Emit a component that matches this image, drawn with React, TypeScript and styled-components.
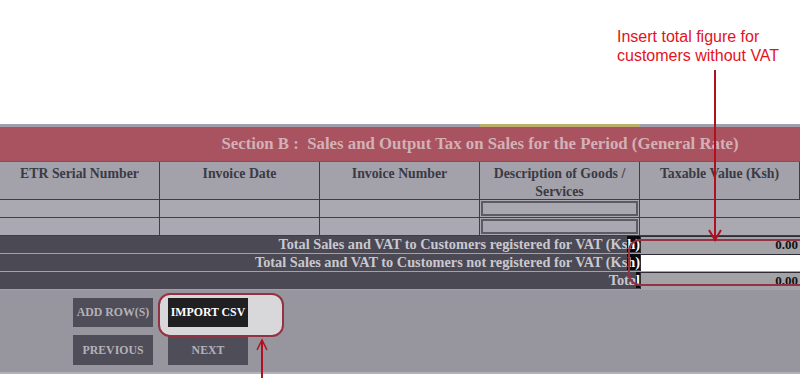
import React from "react";
import styled, { createGlobalStyle } from "styled-components";

const Global = createGlobalStyle`
  html, body { margin: 0; padding: 0; background: #ffffff; }
  body { width: 800px; height: 378px; overflow: hidden; }
  * { box-sizing: border-box; }
`;

const Page = styled.div`
  position: relative;
  width: 800px;
  height: 378px;
  overflow: hidden;
  font-family: "Liberation Serif", "DejaVu Serif", serif;
`;

const TopWhite = styled.div`
  height: 124px;
  background: #ffffff;
`;

const Strip = styled.div`
  height: 3px;
  display: grid;
  grid-template-columns: 480px 160px 160px;
  background: #9f9eab;
`;

const StripSeg = styled.div<{ $c: string }>`
  background: ${(p) => p.$c};
`;

const SectionBar = styled.div`
  height: 35px;
  background: #a8535f;
  color: #d3b1b6;
  font-weight: bold;
  font-size: 16.8px;
  display: flex;
  align-items: center;
  justify-content: center;
  padding-left: 160px;
  white-space: pre;
  border-bottom: 1px solid #6e5a63;
`;

const Grid = styled.div`
  display: grid;
  grid-template-columns: repeat(5, 160px);
`;

const HeadCell = styled.div`
  height: 38px;
  background: #a3a2ab;
  border-right: 1px solid #3e3d48;
  border-bottom: 1px solid #3e3d48;
  color: #3b3a44;
  font-weight: bold;
  font-size: 13.8px;
  line-height: 18px;
  text-align: center;
  padding: 3px 4px 0;
  &:last-child { border-right: none; }
`;

const BodyCell = styled.div<{ $boxed?: boolean; $last?: boolean }>`
  height: 18px;
  background: #aaa9b2;
  border-right: ${(p) => (p.$last ? "none" : "1px solid #3e3d48")};
  border-bottom: 1px solid #3e3d48;
  padding: ${(p) => (p.$boxed ? "1px" : "0")};
`;

const InsetBox = styled.div`
  height: 100%;
  border: 2px solid #5c5b64;
  background: #a9a8b1;
`;

const TotalRow = styled.div`
  display: grid;
  grid-template-columns: 640px 160px;
  height: 18px;
  background: #4b4954;
  border-bottom: 1px solid #a3a2ab;
`;

const TotalLabel = styled.div`
  color: #c9c8cf;
  font-weight: bold;
  font-size: 14.3px;
  line-height: 17px;
  text-align: right;
  white-space: nowrap;
`;

const Clip = styled.span`
  background: #0a0a0e;
  color: #ffffff;
`;

const ValueCell = styled.div<{ $white?: boolean }>`
  background: ${(p) => (p.$white ? "#ffffff" : "#a3a2a7")};
  border-top: 1px solid #2e2d36;
  border-left: 1px solid #2e2d36;
  color: #111111;
  font-weight: bold;
  font-size: 13px;
  line-height: 16px;
  text-align: right;
  padding-right: 2px;
`;

const Lower = styled.div`
  height: 84px;
  background: #97969f;
  border-bottom: 2px solid #b2b1b9;
  display: grid;
  grid-template-columns: 80px 80px;
  grid-template-rows: 29px 30px;
  column-gap: 15px;
  row-gap: 8px;
  padding: 8px 0 0 73px;
`;

const Btn = styled.div<{ $dark?: boolean }>`
  background: ${(p) => (p.$dark ? "#201f22" : "#4f4d58")};
  color: ${(p) => (p.$dark ? "#ffffff" : "#b3b2ba")};
  font-weight: bold;
  font-size: 11.8px;
  display: flex;
  align-items: center;
  justify-content: center;
  white-space: nowrap;
  position: relative;
  z-index: ${(p) => (p.$dark ? 2 : 0)};
`;

const Note = styled.div`
  position: absolute;
  left: 617px;
  top: 27px;
  color: #e3121c;
  font-family: "Liberation Sans", Arial, sans-serif;
  font-size: 16px;
  line-height: 19px;
`;

const Ring = styled.div<{ $fill?: boolean }>`
  position: absolute;
  border: 2px solid #943243;
  border-radius: 12px;
  background: ${(p) => (p.$fill ? "#d8d8da" : "transparent")};
`;

const Overlay = styled.svg`
  position: absolute;
  left: 0;
  top: 0;
  pointer-events: none;
  z-index: 3;
`;

const cols = ["ETR Serial Number", "Invoice Date", "Invoice Number", "Description of Goods / Services", "Taxable Value (Ksh)"];

export default function App() {
  return (
    <Page>
      <Global />
      <TopWhite />
      <Strip>
        <StripSeg $c="#9f9eab" />
        <StripSeg $c="#bcae6c" />
        <StripSeg $c="#9f9eab" />
      </Strip>
      <SectionBar>{"Section B :  Sales and Output Tax on Sales for the Period (General Rate)"}</SectionBar>
      <Grid>
        {cols.map((c) => (
          <HeadCell key={c}>{c}</HeadCell>
        ))}
        {[0, 1].map((r) =>
          [0, 1, 2, 3, 4].map((i) => (
            <BodyCell key={`${r}-${i}`} $boxed={i === 3} $last={i === 4}>
              {i === 3 && <InsetBox />}
            </BodyCell>
          ))
        )}
      </Grid>
      <TotalRow>
        <TotalLabel>
          Total Sales and VAT to Customers registered for VAT (Ks<Clip>h)</Clip>
        </TotalLabel>
        <ValueCell>0.00</ValueCell>
      </TotalRow>
      <TotalRow>
        <TotalLabel>
          Total Sales and VAT to Customers not registered for VAT (Ks<Clip>h)</Clip>
        </TotalLabel>
        <ValueCell $white />
      </TotalRow>
      <TotalRow>
        <TotalLabel>
          Tota<Clip>l</Clip>
        </TotalLabel>
        <ValueCell>0.00</ValueCell>
      </TotalRow>
      <Lower>
        <Btn>ADD ROW(S)</Btn>
        <Btn $dark>IMPORT CSV</Btn>
        <Btn>PREVIOUS</Btn>
        <Btn>NEXT</Btn>
      </Lower>

      <Ring $fill style={{ left: 158, top: 293, width: 126, height: 44, zIndex: 1 }} />
      <Ring style={{ left: 628, top: 239, width: 190, height: 47, zIndex: 3 }} />

      <Note>
        Insert total figure for
        <br />
        customers without VAT
      </Note>

      <Overlay width="800" height="378" viewBox="0 0 800 378">
        <line x1="715" y1="70" x2="715" y2="238" stroke="#b0101f" strokeWidth="2" />
        <polyline points="709,230 715,240 721,230" fill="none" stroke="#b0101f" strokeWidth="2" />
        <line x1="262" y1="342" x2="262" y2="378" stroke="#b0101f" strokeWidth="2" />
        <polyline points="257,350 262,340 267,350" fill="none" stroke="#b0101f" strokeWidth="1.5" />
      </Overlay>
    </Page>
  );
}
